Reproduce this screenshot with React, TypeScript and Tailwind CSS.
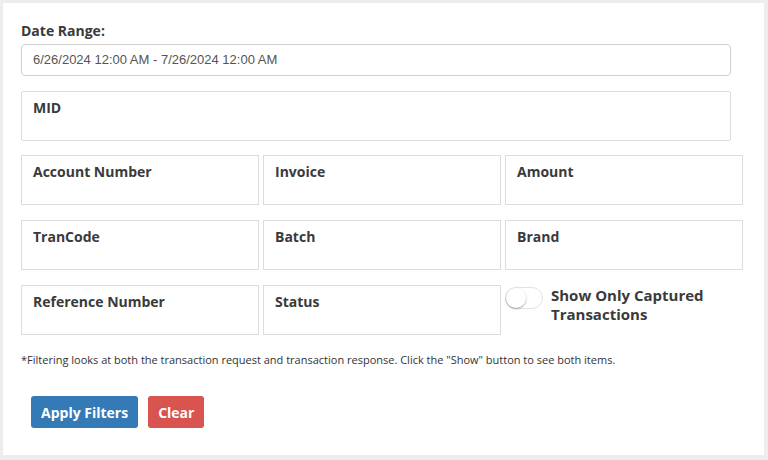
import React from "react";

const font = { fontFamily: '"Open Sans", "Liberation Sans", sans-serif' };

function Field({ label }: { label: string }) {
  return (
    <div className="h-[50px] border border-[#dcdcdc] bg-white px-[11px] pt-[3px]">
      <span className="text-[14px] font-bold leading-[20px] text-[#3a3a3a]">{label}</span>
    </div>
  );
}

export default function App() {
  return (
    <div className="min-h-[460px] w-[768px] bg-[#ededed] pl-[3px] pt-[3px]" style={font}>
      <div className="h-[452px] w-[761px] bg-white pl-[18px] pt-[18px]">
        <div className="text-[14px] font-bold leading-[20px] text-[#3a3a3a]">Date Range:</div>
        <div className="mt-[3px] flex h-[32px] w-[710px] items-center rounded-[4px] border border-[#cfcfcf] px-[11px] text-[13px] text-[#555]" style={{ fontFamily: '"Liberation Sans", Arial, sans-serif' }}>
          6/26/2024 12:00 AM - 7/26/2024 12:00 AM
        </div>
        <div className="mt-[15px] h-[50px] w-[710px] rounded-[2px] border border-[#dcdcdc] px-[11px] pt-[3px]">
          <span className="text-[14px] font-bold leading-[20px] text-[#3a3a3a]">MID</span>
        </div>
        <div className="mt-[14px] grid w-[722px] grid-cols-3 gap-x-[4px] gap-y-[15px]">
          <Field label="Account Number" />
          <Field label="Invoice" />
          <Field label="Amount" />
          <Field label="TranCode" />
          <Field label="Batch" />
          <Field label="Brand" />
          <Field label="Reference Number" />
          <Field label="Status" />
          <div className="flex items-start gap-[8px] pt-[1px]">
            <div className="mt-[1px] flex h-[22px] w-[38px] shrink-0 items-center rounded-full border border-[#e3e3e3] bg-white">
              <div className="h-[20px] w-[20px] rounded-full bg-white shadow-[0_1px_2px_rgba(0,0,0,0.35)]" />
            </div>
            <div className="text-[15px] font-bold leading-[19px] text-[#3a3a3a]">
              <div>Show Only Captured</div>
              <div>Transactions</div>
            </div>
          </div>
        </div>
        <div className="mt-[18px] text-[11px] leading-[14px] text-[#333]">
          *Filtering looks at both the transaction request and transaction response. Click the "Show" button to see both items.
        </div>
        <div className="mt-[29px] flex gap-[10px] pl-[10px]">
          <button className="h-[32px] rounded-[3px] bg-[#337ab7] px-[10px] text-[14px] font-bold text-white">Apply Filters</button>
          <button className="h-[32px] rounded-[3px] bg-[#d9534f] px-[10px] text-[14px] font-bold text-white">Clear</button>
        </div>
      </div>
    </div>
  );
}
